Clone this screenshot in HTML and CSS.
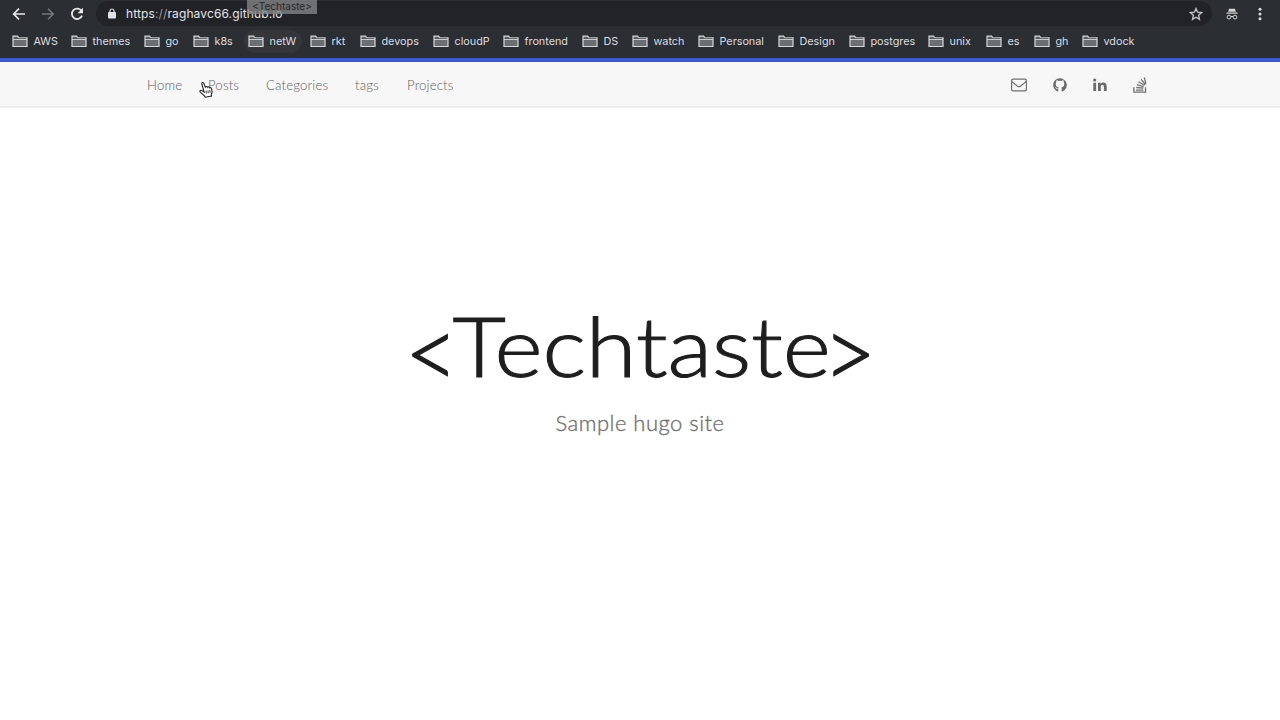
FILE: index.html
```html
<!DOCTYPE html>
<html lang="en">
<head>
  <meta charset="UTF-8">
  <meta name="viewport" content="width=device-width, initial-scale=1.0">
  <title>&lt;Techtaste&gt;</title>
  <link rel="stylesheet" href="styles.css">
</head>
<body>

  <svg width="0" height="0" class="defs">
    <symbol id="folder" viewBox="0 0 16 13">
      <path d="M1 11.5V1.2h4.6l1.3 1.6H15v8.7z" fill="#6b6e72" stroke="#d5d7da" stroke-width="1.2"/>
      <path d="M1 4.4h14" stroke="#d5d7da" stroke-width="1"/>
      <path d="M1.7 3.3h12.6" stroke="#2b2e33" stroke-width=".6"/>
    </symbol>
  </svg>

  <div class="browser">
    <div class="toolbar">
      <svg class="back" width="14" height="14" viewBox="0 0 14 14" fill="none" stroke="#e6e7e9" stroke-width="1.7"><path d="M13 7H2M7 1.7L1.7 7 7 12.3"/></svg>
      <svg class="forward" width="14" height="14" viewBox="0 0 14 14" fill="none" stroke="#74777b" stroke-width="1.6"><path d="M1 7h11M7 1.7L12.3 7 7 12.3"/></svg>
      <svg class="reload" width="14" height="14" viewBox="0 0 14 14"><path d="M11.5 4A5.2 5.2 0 1 0 12 8.6" fill="none" stroke="#e6e7e9" stroke-width="1.8"/><path d="M13 .8v5.4H7.6z" fill="#e6e7e9"/></svg>
      <div class="omnibox">
        <svg class="lock" width="8" height="11" viewBox="0 0 8 11"><path d="M2 5V3a2 2 0 0 1 4 0v2" fill="none" stroke="#e0e2e4" stroke-width="1.2"/><rect y="4" width="8" height="6.5" rx="1" fill="#e0e2e4"/></svg>
        <span class="url">https<i>://</i>raghavc66.github.io</span>
        <svg class="star" width="14" height="14" viewBox="0 0 14 14"><path d="M7 1.500l1.600 3.700 4 .4-3 2.700.9 4L7 10.200l-3.500 2.100.9-4-3-2.700 4-.4z" fill="none" stroke="#c6c8ca" stroke-width="1.300"/></svg>
      </div>
      <svg class="incognito" width="12" height="12" viewBox="0 0 12 12"><path d="M3 .8h6l.9 3H2.100zM.5 4.600h11v1.200H.5z" fill="#d2d4d6"/><g fill="none" stroke="#d2d4d6"><circle cx="3" cy="9.100" r="1.900"/><circle cx="9" cy="9.100" r="1.900"/><path d="M4.900 8.700q1.100-.7 2.200 0"/></g></svg>
      <svg class="menu" width="4" height="14" viewBox="0 0 4 14" fill="#dcdee0"><circle cx="2" cy="2.300" r="1.500"/><circle cx="2" cy="7" r="1.500"/><circle cx="2" cy="11.700" r="1.500"/></svg>
      <div class="tooltip">&lt;Techtaste&gt;</div>
    </div>

    <div class="bookmarks">
      <span><svg><use href="#folder"/></svg>AWS</span>
      <span><svg><use href="#folder"/></svg>themes</span>
      <span><svg><use href="#folder"/></svg>go</span>
      <span><svg><use href="#folder"/></svg>k8s</span>
      <span class="hovered"><svg><use href="#folder"/></svg>netW</span>
      <span><svg><use href="#folder"/></svg>rkt</span>
      <span><svg><use href="#folder"/></svg>devops</span>
      <span><svg><use href="#folder"/></svg>cloudP</span>
      <span><svg><use href="#folder"/></svg>frontend</span>
      <span><svg><use href="#folder"/></svg>DS</span>
      <span><svg><use href="#folder"/></svg>watch</span>
      <span><svg><use href="#folder"/></svg>Personal</span>
      <span><svg><use href="#folder"/></svg>Design</span>
      <span><svg><use href="#folder"/></svg>postgres</span>
      <span><svg><use href="#folder"/></svg>unix</span>
      <span><svg><use href="#folder"/></svg>es</span>
      <span><svg><use href="#folder"/></svg>gh</span>
      <span><svg><use href="#folder"/></svg>vdock</span>
    </div>
  </div>

  <header class="site-header">
    <nav class="site-nav">
      <a>Home</a>
      <a>Posts</a>
      <a>Categories</a>
      <a>tags</a>
      <a>Projects</a>
    </nav>
    <div class="social">
      <svg width="16" height="14" viewBox="0 0 16 14" fill="none" stroke="#707070" stroke-width="1.200"><rect x=".6" y="1.100" width="14.800" height="11.800" rx="1.300"/><path d="M.8 3.600C3 5.600 5 7 6.500 8.200q1.500 1 3 0C11 7 13 5.600 15.200 3.600"/></svg>
      <svg width="14" height="14" viewBox="0 0 16 16" fill="#6b6b6b"><path d="M8 .3C3.700.3.200 3.800.2 8.100c0 3.400 2.200 6.300 5.300 7.400.4.100.5-.2.500-.4v-2.500c-2.200.5-2.700-.6-2.900-1.200-.1-.3-.5-.9-.9-1.100.9-.3 1.500.6 1.800 1 .6.900 1.400.8 2.100.6.100-.5.300-.9.600-1.100-2-.2-3.600-1-3.600-3.900 0-.8.300-1.500.8-2.100-.1-.2-.4-1 .1-2.100 0 0 .7-.2 2.100.8a7 7 0 0 1 3.800 0c1.500-1 2.100-.8 2.100-.8.500 1.100.2 1.900.1 2.100.5.600.8 1.300.8 2.100 0 2.900-1.700 3.700-3.600 3.900.4.400.6.900.6 1.600v2.700c0 .2.100.5.500.4A7.800 7.800 0 0 0 8 .3z"/></svg>
      <svg width="14" height="14" viewBox="0 0 14 14" fill="#6b6b6b"><circle cx="1.700" cy="2" r="1.600"/><path d="M.3 4.700h2.800V13H.3zM5 4.700h2.600v1.200c.5-.8 1.300-1.400 2.600-1.400 2.300 0 3.500 1.500 3.500 3.900V13h-2.800V8.700c0-1.200-.5-1.900-1.500-1.900-1.100 0-1.600.8-1.600 2V13H5z"/></svg>
      <svg width="14" height="16" viewBox="0 0 14 16" fill="none" stroke="#707070" stroke-width="1.300"><path d="M.9 10.200v5h11.600v-5M3 13.100h7.400M3.200 10.500l7.200.7M3.900 7.700l6.800 1.900M5.500 4.800l6 3.500M8.100 2.300l4.300 5.200M11.300.6l1.600 6.300"/></svg>
    </div>
  </header>

  <main class="hero">
    <h1><span class="open">&lt;</span>Techtaste<span class="close">&gt;</span></h1>
    <p>Sample hugo site</p>
  </main>

  <svg class="cursor" width="14" height="17" viewBox="0 0 14 17"><path d="M4.700 9.400L2.800 3c-.4-1.500 1.400-2.100 2-.8l1.500 3.900c.4-.9 1.800-.8 2.100.1.500-.7 1.800-.5 2 .5.7-.5 1.900 0 2.100 1l.6 3.200-.8 2.600.2 1.500-6.300 1.200-.5-1.200-4.400-3.900C.3 9.800 1.500 8.800 2.600 9.400l2.500 1.600z" fill="#fff" stroke="#222" stroke-width="1.100"/><path d="M6.900 9.700l.5 2.800M8.900 9.400l.4 2.800M10.800 9.100l.3 2.700" stroke="#222" stroke-width=".9"/></svg>

</body>
</html>
```
FILE: styles.css
```css
body {
  margin: 0;
  height: 720px;
  display: flex;
  flex-direction: column;
  overflow: hidden;
  background-color: #fff;
  font-family: Lato, sans-serif;
}

.defs {
  position: absolute;
}

/* Browser bars */
.browser {
  height: 58px;
  background-color: #2b2e33;
  font-family: Inter, sans-serif;
}

.toolbar {
  position: relative;
  height: 27px;
  display: flex;
  align-items: center;
  padding-left: 12px;
}

.forward {
  margin-left: 15px;
}

.reload {
  margin-left: 15px;
}

.omnibox {
  display: flex;
  align-items: center;
  box-sizing: border-box;
  width: 1116px;
  height: 25px;
  margin-left: 12px;
  padding: 0 9px 0 12px;
  border-radius: 13px;
  background-color: #212327;
}

.url {
  margin-left: 10px;
  color: #e4e5e7;
  font-size: 12px;
  letter-spacing: 0.12px;
}

.url i {
  color: #9a9da1;
  font-style: normal;
}

.star {
  margin-left: auto;
}

.incognito {
  margin-left: 14px;
}

.menu {
  margin-left: 20px;
}

.tooltip {
  position: absolute;
  top: 0;
  left: 247px;
  width: 70px;
  height: 14px;
  background-color: rgba(130, 131, 133, 0.8);
  color: #26282b;
  font-size: 10px;
  line-height: 13px;
  text-align: center;
}

.bookmarks {
  display: grid;
  grid-template-columns: 59px 73px 49px 55px 62px 50px 73px 70px 79px 50px 66px 80px 71px 79px 58px 48px 48px 80px;
  height: 29px;
  padding-left: 12px;
  color: #dcdee0;
  font-size: 10.8px;
}

.bookmarks span {
  display: flex;
  align-items: center;
  white-space: nowrap;
}

.bookmarks svg {
  width: 16px;
  height: 13px;
  margin-right: 6px;
  margin-left: -0.5px;
}

.bookmarks .hovered {
  margin: 3px 8px 3px -4px;
  padding-left: 4px;
  border-radius: 12px;
  background-color: #34363a;
}

/* Site header */
.site-header {
  display: flex;
  justify-content: space-between;
  box-sizing: border-box;
  height: 50px;
  padding: 1px 133px 0 147px;
  border-top: 4px solid #3b58d4;
  border-bottom: 2px solid #ebebeb;
  background-color: #f7f7f7;
}

.site-nav {
  display: grid;
  grid-template-columns: 61px 58px 89px 52px 60px;
  align-items: center;
  color: #606060;
  font-size: 13.2px;
  font-weight: 300;
  letter-spacing: 0.15px;
}

.social {
  display: flex;
  align-items: center;
  gap: 26px;
}

/* Hero */
.hero {
  display: flex;
  flex-direction: column;
  align-items: center;
  padding-top: 185px;
}

.hero h1 {
  margin: 0;
  color: #1e1e1e;
  font-size: 83px;
  font-weight: 300;
  line-height: 104px;
  transform: scaleX(1.11);
  -webkit-text-stroke: 1.1px #1e1e1e;
}

.hero h1 span {
  display: inline-block;
  transform: translateY(5px) scaleY(1.22);
}

.hero .open {
  margin-right: -5px;
}

.hero .close {
  margin-left: -7px;
}

.hero p {
  margin: 13px 0 0;
  color: #707070;
  font-size: 22px;
  font-weight: 300;
  line-height: 26px;
  letter-spacing: 0.5px;
  -webkit-text-stroke: 0.35px #707070;
}

.cursor {
  position: absolute;
  top: 81px;
  left: 199px;
}
```
